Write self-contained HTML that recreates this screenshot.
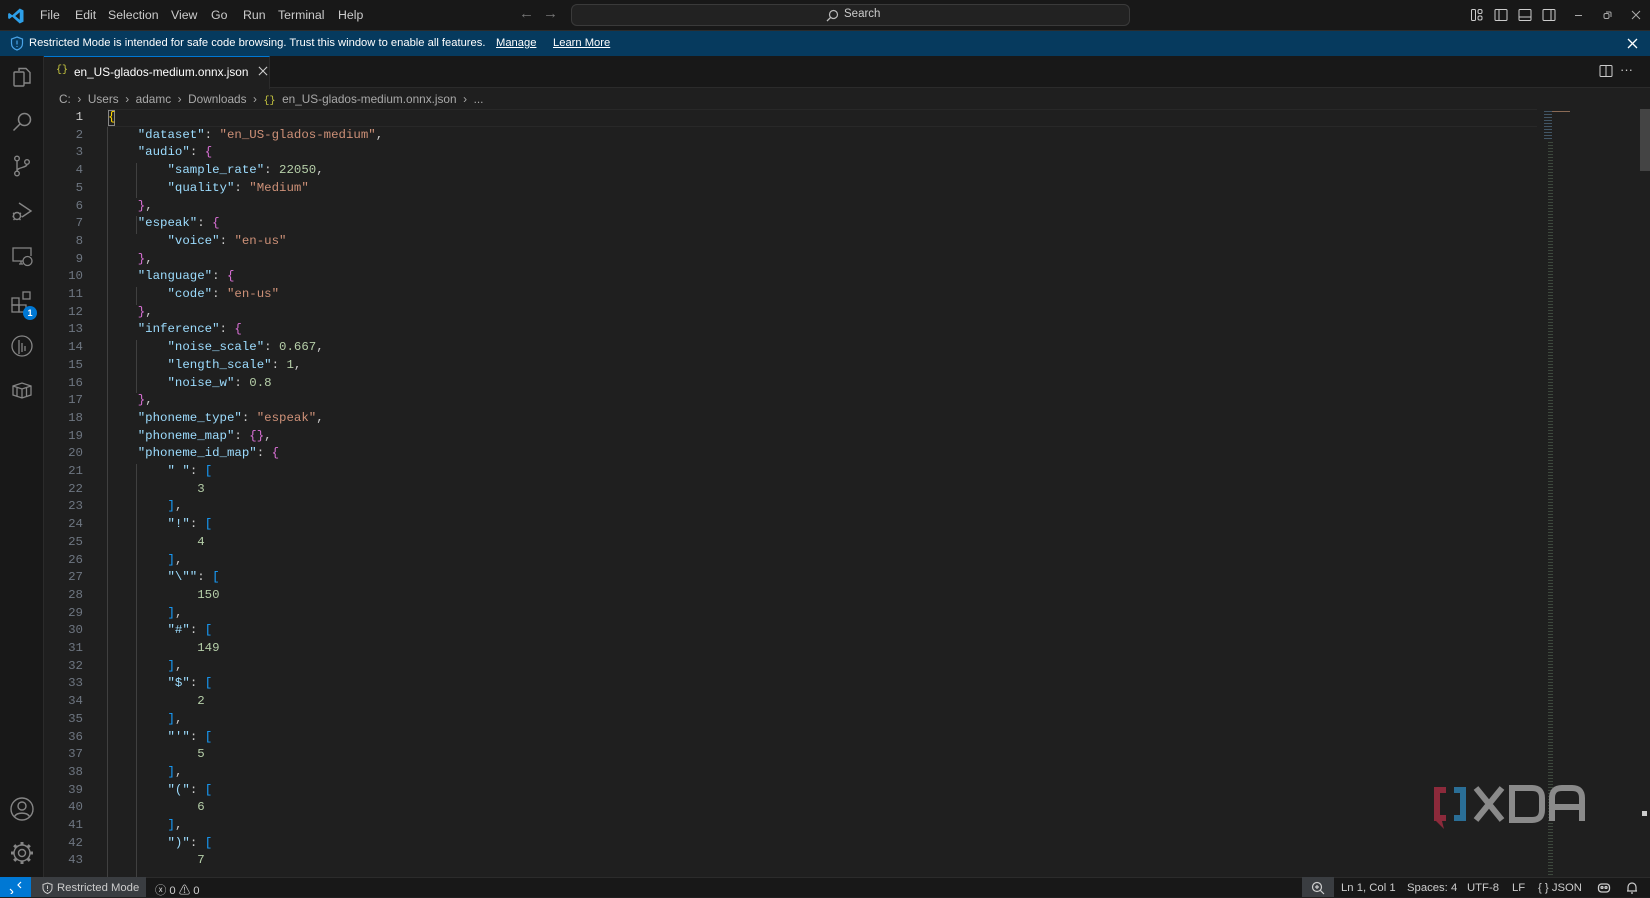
<!DOCTYPE html>
<html><head><meta charset="utf-8"><style>
*{margin:0;padding:0;box-sizing:border-box}
body{width:1650px;height:897px;overflow:hidden;background:#1f1f1f;font-family:"Liberation Sans",sans-serif;color:#ccc;position:relative}
.abs{position:absolute}
#title{left:0;top:0;width:1650px;height:31px;background:#181818;border-bottom:1px solid #2b2b2b}
.menu{top:8px;font-size:12.3px;color:#ccc}
#banner{left:0;top:31px;width:1650px;height:25px;background:#063a5e;font-size:11.2px;color:#fff}
#act{left:0;top:56px;width:44px;height:821px;background:#181818;border-right:1px solid #2b2b2b}
#tabs{left:44px;top:56px;width:1606px;height:32px;background:#181818;border-bottom:1px solid #2b2b2b}
#tab{left:44px;top:56px;width:226px;height:33px;background:#1f1f1f;border-top:1px solid #0078d4;border-right:1px solid #2b2b2b}
#crumb{left:59px;top:92px;font-size:11.8px;color:#a9a9a9;white-space:pre}
#code{left:0;top:109px;font-family:"Liberation Mono",monospace;font-size:12.4px}
.ln{position:absolute;left:0;width:1000px;height:17.7px;line-height:17.7px;white-space:pre}
.n{position:absolute;left:0;width:83px;text-align:right;color:#6e7681}
.c{position:absolute;left:108px;color:#ccc}
.k{color:#9cdcfe}.s{color:#ce9178}.d{color:#b5cea8}.y{color:#ffd700}.p{color:#da70d6}.b{color:#179fff}
#status{left:0;top:877px;width:1650px;height:20px;background:#181818;border-top:1px solid #2b2b2b;font-size:11.3px;color:#ccc}
.st{position:absolute;top:4px}
svg{position:absolute}
</style></head><body>
<div id="title" class="abs">
<svg style="left:7px;top:7px" width="18" height="18" viewBox="0 0 24 24"><path d="M17 2 L22 4.5 V19.5 L17 22 L7 13 L3 16 L1.5 15 V9 L3 8 L7 11 L17 2Z M17 7 L11 12 L17 17Z" fill="#2d9fe8" fill-rule="evenodd"/></svg>
<span class="abs menu" style="left:40px">File</span>
<span class="abs menu" style="left:75px">Edit</span>
<span class="abs menu" style="left:108px">Selection</span>
<span class="abs menu" style="left:171px">View</span>
<span class="abs menu" style="left:211px">Go</span>
<span class="abs menu" style="left:243px">Run</span>
<span class="abs menu" style="left:278px">Terminal</span>
<span class="abs menu" style="left:338px">Help</span>
<span class="abs" style="left:519px;top:5px;font-size:15px;color:#777">←</span>
<span class="abs" style="left:543px;top:5px;font-size:15px;color:#777">→</span>
<div class="abs" style="left:571px;top:4px;width:559px;height:22px;background:#222;border:1px solid #3a3a3a;border-radius:6px"></div>
<svg style="left:826px;top:9px" width="13" height="13" viewBox="0 0 13 13"><circle cx="7.5" cy="5.5" r="4" fill="none" stroke="#bbb" stroke-width="1.2"/><path d="M4.6 8.4 L1 12" stroke="#bbb" stroke-width="1.3"/></svg>
<span class="abs" style="left:844px;top:8px;font-size:11.5px;color:#ccc">Search</span>
<svg style="left:1470px;top:8px" width="14" height="14" viewBox="0 0 14 14" fill="none" stroke="#ccc"><rect x="1.5" y="1.5" width="4" height="11" rx="1"/><rect x="8" y="1.5" width="4" height="4" rx="1.5"/><rect x="8" y="8" width="4" height="4" rx="1.5"/></svg>
<svg style="left:1494px;top:8px" width="14" height="14" viewBox="0 0 14 14" fill="none" stroke="#ccc"><rect x="1" y="1.5" width="12" height="11" rx="1"/><path d="M5 1.5V12.5"/></svg>
<svg style="left:1518px;top:8px" width="14" height="14" viewBox="0 0 14 14" fill="none" stroke="#ccc"><rect x="1" y="1.5" width="12" height="11" rx="1"/><path d="M1 9H13"/></svg>
<svg style="left:1542px;top:8px" width="14" height="14" viewBox="0 0 14 14" fill="none" stroke="#ccc"><rect x="1" y="1.5" width="12" height="11" rx="1"/><path d="M9 1.5V12.5"/></svg>
<div class="abs" style="left:1575px;top:15px;width:7px;height:1px;background:#aaa"></div>
<svg style="left:1603px;top:11px" width="9" height="9" viewBox="0 0 9 9" fill="none" stroke="#aaa"><rect x="1" y="2.5" width="5" height="5" rx="1.5"/><path d="M3 1H7a1 1 0 0 1 1 1V6"/></svg>
<svg style="left:1631px;top:10px" width="10" height="10" viewBox="0 0 10 10" stroke="#aaa"><path d="M1 1L9 9M9 1L1 9"/></svg>
</div>
<div id="banner" class="abs">
<svg style="left:10px;top:5px" width="14" height="15" viewBox="0 0 14 15" fill="none" stroke="#4aa3e6" stroke-width="1.2"><path d="M7 1L12.5 3V7.5C12.5 11 10 13 7 14C4 13 1.5 11 1.5 7.5V3Z"/><path d="M7 4.5V8.5M7 10V11"/></svg>
<span class="abs" style="left:29px;top:6px">Restricted Mode is intended for safe code browsing. Trust this window to enable all features.</span>
<span class="abs" style="left:496px;top:6px;text-decoration:underline">Manage</span>
<span class="abs" style="left:553px;top:6px;text-decoration:underline">Learn More</span>
<svg style="left:1627px;top:7px" width="11" height="11" viewBox="0 0 11 11" stroke="#fff" stroke-width="1.3"><path d="M1 1L10 10M10 1L1 10"/></svg>
</div>
<div id="act" class="abs">
<svg style="left:10px;top:9px" width="24" height="24" viewBox="0 0 24 24" fill="none" stroke="#858585" stroke-width="1.4"><path d="M9 6V3.5H16L20 7.5V18H14"/><rect x="4" y="7" width="10" height="14" rx="1"/></svg>
<svg style="left:10px;top:54px" width="24" height="24" viewBox="0 0 24 24" fill="none" stroke="#858585" stroke-width="1.5"><circle cx="14.5" cy="9.5" r="6"/><path d="M10 14L3.5 20.5"/></svg>
<svg style="left:10px;top:98px" width="24" height="24" viewBox="0 0 24 24" fill="none" stroke="#858585" stroke-width="1.4"><circle cx="7" cy="4.5" r="2.3"/><circle cx="7" cy="19.5" r="2.3"/><circle cx="17" cy="8" r="2.3"/><path d="M7 7V17M17 10.3C17 14 7 13 7 17"/></svg>
<svg style="left:10px;top:143px" width="24" height="24" viewBox="0 0 24 24" fill="none" stroke="#858585" stroke-width="1.4"><path d="M9 4L21 12L12 18"/><circle cx="7" cy="17" r="3.5"/><path d="M3 14L4.5 15M11 14L9.5 15M2.5 17.5H3.5M10.5 17.5H11.5M3.5 21L4.5 20M10.5 21L9.5 20"/></svg>
<svg style="left:10px;top:188px" width="24" height="24" viewBox="0 0 24 24" fill="none" stroke="#858585" stroke-width="1.3"><path d="M13 17H3V4H21V12"/><path d="M9 20H13M11 17V20"/><circle cx="17.5" cy="17" r="4.5"/></svg>
<svg style="left:10px;top:234px" width="24" height="24" viewBox="0 0 24 24" fill="none" stroke="#858585" stroke-width="1.3"><rect x="2" y="8" width="7" height="7"/><rect x="2" y="15" width="7" height="7"/><rect x="9" y="15" width="7" height="7"/><rect x="13" y="2" width="7" height="7"/></svg>
<div class="abs" style="left:23px;top:250px;width:14px;height:14px;border-radius:7px;background:#0078d4;color:#fff;font-size:9px;font-weight:bold;text-align:center;line-height:14px">1</div>
<svg style="left:10px;top:278px" width="24" height="24" viewBox="0 0 24 24" fill="none" stroke="#858585" stroke-width="1.3"><circle cx="12" cy="12" r="10"/><path d="M9 6V20M12 9V18M15 12V17"/></svg>
<svg style="left:10px;top:322px" width="24" height="24" viewBox="0 0 24 24" fill="none" stroke="#858585" stroke-width="1.3"><path d="M3 8L12 5L21 8V17L12 20L3 17Z M3 8L12 11L21 8M12 11V20M7 9.5V18.5M16.5 9.5V18.5"/></svg>
<svg style="left:9px;top:740px" width="26" height="26" viewBox="0 0 26 26" fill="none" stroke="#858585" stroke-width="1.4"><circle cx="13" cy="13" r="11"/><circle cx="13" cy="10" r="4"/><path d="M5.5 20.5C8 16 18 16 20.5 20.5"/></svg>
<svg style="left:9px;top:784px" width="26" height="26" viewBox="0 0 26 26" fill="none" stroke="#858585" stroke-width="1.4"><circle cx="13" cy="13" r="3.5"/><circle cx="13" cy="13" r="8"/><path d="M13 2V5M13 21V24M2 13H5M21 13H24M5.2 5.2L7.3 7.3M18.7 18.7L20.8 20.8M5.2 20.8L7.3 18.7M18.7 7.3L20.8 5.2" stroke-width="3"/></svg>
</div>
<div id="tabs" class="abs"></div>
<div id="tab" class="abs">
<span class="abs" style="left:12px;top:8px;font-size:10px;color:#cbcb41;font-family:'Liberation Mono',monospace">{}</span>
<span class="abs" style="left:30px;top:8px;font-size:11.8px;color:#fff">en_US-glados-medium.onnx.json</span>
<svg style="left:214px;top:9px" width="10" height="10" viewBox="0 0 11 11" stroke="#ccc" stroke-width="1.2"><path d="M1 1L10 10M10 1L1 10"/></svg>
</div>
<svg style="left:1599px;top:64px" width="14" height="14" viewBox="0 0 14 14" fill="none" stroke="#ccc"><rect x="1" y="1.5" width="12" height="11" rx="1"/><path d="M7 1.5V12.5"/></svg>
<span class="abs" style="left:1620px;top:62px;font-size:13px;color:#ccc">···</span>
<div id="crumb" class="abs">C:  ›  Users  ›  adamc  ›  Downloads  ›  <span style="color:#cbcb41;font-family:'Liberation Mono',monospace;font-size:10px">{}</span>  en_US-glados-medium.onnx.json  ›  ...</div>
<div class="abs" style="left:107px;top:109px;width:1430px;height:18px;border-top:1px solid #282828;border-bottom:1px solid #282828"></div>
<div class="abs" style="left:108px;top:110px;width:7px;height:16px;border:1px solid #888"></div>
<div class="abs" style="left:107px;top:127px;width:1px;height:750px;background:#404040"></div>
<div class="abs" style="left:136px;top:163px;width:1px;height:35px;background:#404040"></div>
<div class="abs" style="left:136px;top:216px;width:1px;height:18px;background:#404040"></div>
<div class="abs" style="left:136px;top:287px;width:1px;height:18px;background:#404040"></div>
<div class="abs" style="left:136px;top:340px;width:1px;height:53px;background:#404040"></div>
<div class="abs" style="left:136px;top:464px;width:1px;height:413px;background:#404040"></div>
<div id="code" class="abs">
<div class="ln" style="top:0"><span class="n" style="color:#ccc">1</span><span class="c"><span class="y">{</span></span></div>
<div class="ln" style="top:17.7px"><span class="n">2</span><span class="c">    <span class="k">"dataset"</span>: <span class="s">"en_US-glados-medium"</span>,</span></div>
<div class="ln" style="top:35.4px"><span class="n">3</span><span class="c">    <span class="k">"audio"</span>: <span class="p">{</span></span></div>
<div class="ln" style="top:53.1px"><span class="n">4</span><span class="c">        <span class="k">"sample_rate"</span>: <span class="d">22050</span>,</span></div>
<div class="ln" style="top:70.8px"><span class="n">5</span><span class="c">        <span class="k">"quality"</span>: <span class="s">"Medium"</span></span></div>
<div class="ln" style="top:88.5px"><span class="n">6</span><span class="c">    <span class="p">}</span>,</span></div>
<div class="ln" style="top:106.2px"><span class="n">7</span><span class="c">    <span class="k">"espeak"</span>: <span class="p">{</span></span></div>
<div class="ln" style="top:123.9px"><span class="n">8</span><span class="c">        <span class="k">"voice"</span>: <span class="s">"en-us"</span></span></div>
<div class="ln" style="top:141.6px"><span class="n">9</span><span class="c">    <span class="p">}</span>,</span></div>
<div class="ln" style="top:159.3px"><span class="n">10</span><span class="c">    <span class="k">"language"</span>: <span class="p">{</span></span></div>
<div class="ln" style="top:177px"><span class="n">11</span><span class="c">        <span class="k">"code"</span>: <span class="s">"en-us"</span></span></div>
<div class="ln" style="top:194.7px"><span class="n">12</span><span class="c">    <span class="p">}</span>,</span></div>
<div class="ln" style="top:212.4px"><span class="n">13</span><span class="c">    <span class="k">"inference"</span>: <span class="p">{</span></span></div>
<div class="ln" style="top:230.1px"><span class="n">14</span><span class="c">        <span class="k">"noise_scale"</span>: <span class="d">0.667</span>,</span></div>
<div class="ln" style="top:247.8px"><span class="n">15</span><span class="c">        <span class="k">"length_scale"</span>: <span class="d">1</span>,</span></div>
<div class="ln" style="top:265.5px"><span class="n">16</span><span class="c">        <span class="k">"noise_w"</span>: <span class="d">0.8</span></span></div>
<div class="ln" style="top:283.2px"><span class="n">17</span><span class="c">    <span class="p">}</span>,</span></div>
<div class="ln" style="top:300.9px"><span class="n">18</span><span class="c">    <span class="k">"phoneme_type"</span>: <span class="s">"espeak"</span>,</span></div>
<div class="ln" style="top:318.6px"><span class="n">19</span><span class="c">    <span class="k">"phoneme_map"</span>: <span class="p">{}</span>,</span></div>
<div class="ln" style="top:336.3px"><span class="n">20</span><span class="c">    <span class="k">"phoneme_id_map"</span>: <span class="p">{</span></span></div>
<div class="ln" style="top:354px"><span class="n">21</span><span class="c">        <span class="k">" "</span>: <span class="b">[</span></span></div>
<div class="ln" style="top:371.7px"><span class="n">22</span><span class="c">            <span class="d">3</span></span></div>
<div class="ln" style="top:389.4px"><span class="n">23</span><span class="c">        <span class="b">]</span>,</span></div>
<div class="ln" style="top:407.1px"><span class="n">24</span><span class="c">        <span class="k">"!"</span>: <span class="b">[</span></span></div>
<div class="ln" style="top:424.8px"><span class="n">25</span><span class="c">            <span class="d">4</span></span></div>
<div class="ln" style="top:442.5px"><span class="n">26</span><span class="c">        <span class="b">]</span>,</span></div>
<div class="ln" style="top:460.2px"><span class="n">27</span><span class="c">        <span class="k">"\""</span>: <span class="b">[</span></span></div>
<div class="ln" style="top:477.9px"><span class="n">28</span><span class="c">            <span class="d">150</span></span></div>
<div class="ln" style="top:495.6px"><span class="n">29</span><span class="c">        <span class="b">]</span>,</span></div>
<div class="ln" style="top:513.3px"><span class="n">30</span><span class="c">        <span class="k">"#"</span>: <span class="b">[</span></span></div>
<div class="ln" style="top:531px"><span class="n">31</span><span class="c">            <span class="d">149</span></span></div>
<div class="ln" style="top:548.7px"><span class="n">32</span><span class="c">        <span class="b">]</span>,</span></div>
<div class="ln" style="top:566.4px"><span class="n">33</span><span class="c">        <span class="k">"$"</span>: <span class="b">[</span></span></div>
<div class="ln" style="top:584.1px"><span class="n">34</span><span class="c">            <span class="d">2</span></span></div>
<div class="ln" style="top:601.8px"><span class="n">35</span><span class="c">        <span class="b">]</span>,</span></div>
<div class="ln" style="top:619.5px"><span class="n">36</span><span class="c">        <span class="k">"'"</span>: <span class="b">[</span></span></div>
<div class="ln" style="top:637.2px"><span class="n">37</span><span class="c">            <span class="d">5</span></span></div>
<div class="ln" style="top:654.9px"><span class="n">38</span><span class="c">        <span class="b">]</span>,</span></div>
<div class="ln" style="top:672.6px"><span class="n">39</span><span class="c">        <span class="k">"("</span>: <span class="b">[</span></span></div>
<div class="ln" style="top:690.3px"><span class="n">40</span><span class="c">            <span class="d">6</span></span></div>
<div class="ln" style="top:708px"><span class="n">41</span><span class="c">        <span class="b">]</span>,</span></div>
<div class="ln" style="top:725.7px"><span class="n">42</span><span class="c">        <span class="k">")"</span>: <span class="b">[</span></span></div>
<div class="ln" style="top:743.4px"><span class="n">43</span><span class="c">            <span class="d">7</span></span></div>
</div>
<div class="abs" style="left:1544px;top:111px;width:8px;height:30px;background:repeating-linear-gradient(#5a7a95 0 1px,transparent 1px 3px);opacity:.6"></div>
<div class="abs" style="left:1552px;top:111px;width:18px;height:1px;background:#8a6a55"></div>
<div class="abs" style="left:1548px;top:142px;width:5px;height:735px;background:repeating-linear-gradient(#4a5a4a 0 1px,transparent 1px 3px);opacity:.7"></div>
<div class="abs" style="left:1640px;top:109px;width:10px;height:62px;background:#444"></div>
<svg style="left:1432px;top:785px" width="160" height="46" viewBox="0 0 160 46">
<path d="M2 2H14V8H8V30H14V36H10L12 44L4 36H2Z" fill="#8c2a3b"/>
<path d="M22 2H34V36H22V30H28V8H22Z" fill="#2a6e96"/>
<g fill="none" stroke="#8a8a8a" stroke-width="6"><path d="M44 3L70 35M70 3L44 35"/><path d="M80 3H100Q110 3 110 13V25Q110 35 100 35H80Z"/><path d="M120 36V13Q120 3 130 3H140Q150 3 150 13V36M120 22H150"/></g>
</svg>
<div class="abs" style="left:1642px;top:811px;width:5px;height:5px;background:#ccc"></div>
<div id="status" class="abs">
<div class="abs" style="left:0;top:-1px;width:31px;height:20px;background:#0078d4"></div>
<svg style="left:9px;top:3px" width="13" height="13" viewBox="0 0 13 13" fill="none" stroke="#fff" stroke-width="1.2"><path d="M1 8L4 11M4 11L1 14M12 1L9 4L12 7"/></svg>
<div class="abs" style="left:31px;top:-1px;width:115px;height:20px;background:#3a3d41"></div>
<svg style="left:42px;top:4px" width="11" height="12" viewBox="0 0 11 12" fill="none" stroke="#ccc"><path d="M5.5 1L10 2.5V6C10 9 8 10.5 5.5 11.5C3 10.5 1 9 1 6V2.5Z"/><path d="M5.5 3.5V7M5.5 8V9"/></svg>
<span class="st" style="left:57px">Restricted Mode</span>
<span class="st" style="left:155px">ⓧ 0 ⚠ 0</span>
<div class="abs" style="left:1302px;top:-1px;width:32px;height:20px;background:#3a3d41"></div>
<svg style="left:1311px;top:3px" width="14" height="14" viewBox="0 0 14 14" fill="none" stroke="#ccc" stroke-width="1.2"><circle cx="6" cy="6" r="4.5"/><path d="M9.3 9.3L13 13M4 6H8M6 4V8"/></svg>
<span class="st" style="left:1341px">Ln 1, Col 1</span>
<span class="st" style="left:1407px">Spaces: 4</span>
<span class="st" style="left:1467px">UTF-8</span>
<span class="st" style="left:1512px">LF</span>
<span class="st" style="left:1538px">{ }  JSON</span>
<svg style="left:1597px;top:3px" width="14" height="13" viewBox="0 0 14 13" fill="none" stroke="#ccc" stroke-width="1.3"><rect x="1.5" y="3" width="11" height="8" rx="3"/><circle cx="5" cy="6.5" r="1"/><circle cx="9" cy="6.5" r="1"/></svg>
<svg style="left:1626px;top:3px" width="12" height="13" viewBox="0 0 12 13" fill="none" stroke="#ccc" stroke-width="1.2"><path d="M2 10V6A4 4 0 0 1 10 6V10H2ZM1 10H11M5 12H7"/></svg>
</div>
</body></html>
